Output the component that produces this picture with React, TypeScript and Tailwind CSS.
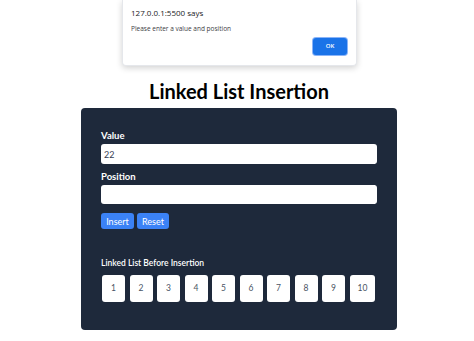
import React, { useState } from 'react';

const initialList = [1, 2, 3, 4, 5, 6, 7, 8, 9, 10];

// Fenêtre d'alerte du navigateur, posée au-dessus de la page
const AlertDialog: React.FC = () => (
  <div className="absolute top-0 left-[122px] w-[235px] h-[66px] bg-white border border-gray-200 border-t-0 rounded-b-[4px] shadow-[0_2px_6px_rgba(0,0,0,0.18)] font-['Open_Sans',sans-serif]">
    <div className="pl-[8px] pt-[8px] text-[8px] leading-[10px] text-[#202124]">127.0.0.1:5500 says</div>
    <div className="pl-[8px] pt-[6px] text-[6.5px] leading-[9px] text-[#3c4043]">Please enter a value and position</div>
    <div className="flex justify-end pr-[9px] pt-[5px]">
      <button className="w-[34px] h-[17px] bg-[#1a73e8] rounded-[3px] ring-1 ring-[#8ab4f8] text-white text-[6px] font-semibold">
        OK
      </button>
    </div>
  </div>
);

export default function App() {
  const [value, setValue] = useState('22');
  const [position, setPosition] = useState('');
  const [list] = useState(initialList);

  return (
    <div className="relative min-h-[341px] bg-white font-['Lato',sans-serif]">
      <AlertDialog />

      <div className="ml-[81px] w-[316px] pt-[78px]">
        <h1 className="text-center text-[20px] leading-[26px] font-bold text-black">
          Linked List Insertion
        </h1>

        <div className="mt-[4px] bg-[#1e293b] rounded-[4px] px-5 pt-[22px] pb-[28px]">
          <label className="block text-[9.5px] leading-[12px] font-bold text-white">Value</label>
          <input
            className="mt-[2px] block w-full h-[20px] bg-white rounded-[3px] px-[3px] text-[9px] text-gray-700 outline-none"
            value={value}
            onChange={(e) => setValue(e.target.value)}
          />

          <label className="mt-[7px] block text-[9.5px] leading-[12px] font-bold text-white">Position</label>
          <input
            className="mt-[2px] block w-full h-[19px] bg-white rounded-[3px] px-[3px] text-[9px] text-gray-700 outline-none"
            value={position}
            onChange={(e) => setPosition(e.target.value)}
          />

          <div className="mt-[9px] flex gap-[3px]">
            <button className="h-[16px] w-[33px] bg-[#3b82f6] rounded-[3px] text-white text-[9px] leading-none">Insert</button>
            <button className="h-[16px] w-[32px] bg-[#3b82f6] rounded-[3px] text-white text-[9px] leading-none">Reset</button>
          </div>

          <h2 className="mt-[28px] text-[8.5px] leading-[12px] font-semibold text-white">Linked List Before Insertion</h2>

          <div className="mt-[6px] ml-px flex gap-[4.5px]">
            {list.map((n) => (
              <div
                key={n}
                className="h-[27px] min-w-[23px] px-[8px] bg-white rounded-[3px] flex items-center justify-center text-[8.5px] text-gray-600"
              >
                {n}
              </div>
            ))}
          </div>
        </div>
      </div>
    </div>
  );
}
